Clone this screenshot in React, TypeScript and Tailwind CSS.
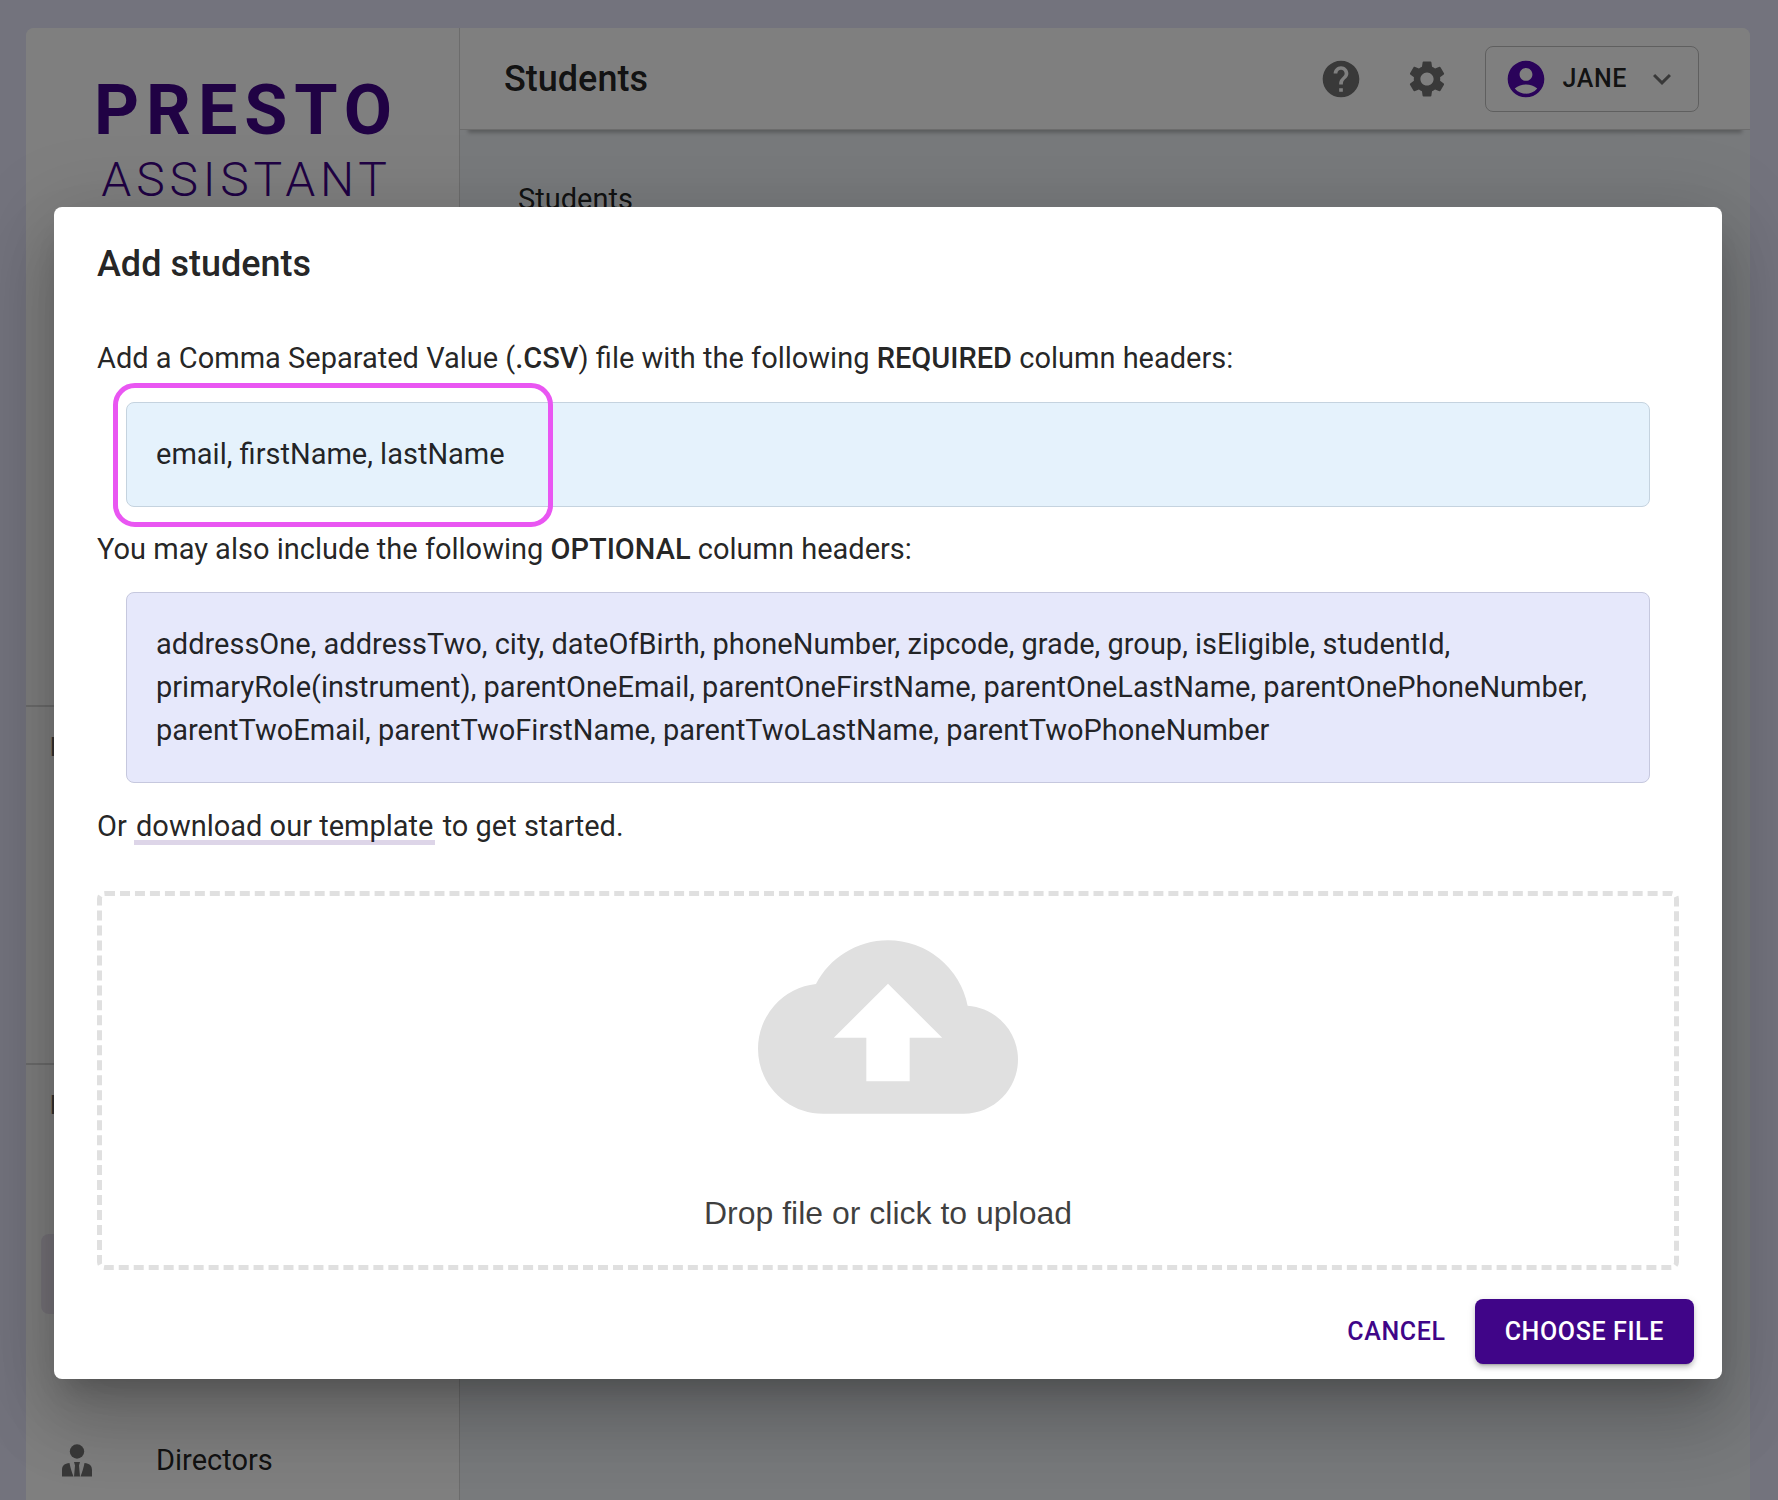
import type { ReactNode } from "react";
import { MdAccountCircle, MdCloudUpload, MdExpandMore, MdHelp, MdSettings } from "react-icons/md";

const requiredColumns = "email, firstName, lastName";

const optionalColumns = [
  "addressOne",
  "addressTwo",
  "city",
  "dateOfBirth",
  "phoneNumber",
  "zipcode",
  "grade",
  "group",
  "isEligible",
  "studentId",
  "primaryRole(instrument)",
  "parentOneEmail",
  "parentOneFirstName",
  "parentOneLastName",
  "parentOnePhoneNumber",
  "parentTwoEmail",
  "parentTwoFirstName",
  "parentTwoLastName",
  "parentTwoPhoneNumber",
];

function DirectorIcon() {
  return (
    <svg viewBox="0 0 30 33" className="h-[33px] w-[30px]" fill="currentColor" aria-hidden="true">
      <circle cx="15" cy="7.5" r="7.2" />
      <path d="M7.500 19 C8.500 24 10 29 11.500 32.500 H0 V26 C0 21.500 2.500 19.500 7.500 19 Z" />
      <path d="M22.500 19 C21.500 24 20 29 18.500 32.500 H30 V26 C30 21.500 27.500 19.500 22.500 19 Z" />
      <path d="M12 18 H18 L17 21.500 L18 32.500 H12 L13 21.500 Z" />
    </svg>
  );
}

function NavItem({ label, icon, selected }: { label: string; icon?: ReactNode; selected?: boolean }) {
  return (
    <li>
      <a
        href="#"
        className={`flex h-20 items-center rounded-lg pl-[21px] ${selected ? "bg-[#400588]/10" : ""}`}
      >
        <span className="w-[94px] text-black/55">{icon}</span>
        {label}
      </a>
    </li>
  );
}

function Sidebar() {
  return (
    <aside className="flex w-[434px] shrink-0 flex-col border-r border-black/15 bg-white pb-10">
      <div className="flex h-[677px] flex-col items-center pt-[42px] pl-2 text-[#400588]">
        <span className="text-[70px] leading-[80px] font-bold tracking-widest">PRESTO</span>
        <span className="text-[48px] leading-[60px] font-light tracking-widest">ASSISTANT</span>
      </div>
      <div className="h-[358px] border-t-2 border-black/15 pt-[21px] pl-6">
        <h3 className="text-[25px] leading-10 font-medium text-black/60">EVENTS</h3>
      </div>
      <div className="border-t-2 border-black/15 pt-[21px]">
        <h3 className="pl-6 text-[25px] leading-10 font-medium text-black/60">PEOPLE</h3>
        <ul className="mx-[15px] mt-[108px] flex flex-col gap-[13px]">
          <NavItem label="Students" selected />
          <NavItem label="Parents" />
          <NavItem label="Directors" icon={<DirectorIcon />} />
        </ul>
      </div>
    </aside>
  );
}

function Header() {
  return (
    <header className="flex h-[102px] items-center border-b border-black/15 bg-white pr-[51px] pl-11 shadow-[0_11px_4px_-8px_rgba(0,0,0,0.25)]">
      <h1 className="flex-1 text-[36px] leading-[58px] font-medium">Students</h1>
      <button type="button" aria-label="Help" className="text-black/55">
        <MdHelp className="size-11" />
      </button>
      <button type="button" aria-label="Settings" className="ml-[42px] text-black/55">
        <MdSettings className="size-11" />
      </button>
      <button
        type="button"
        className="ml-9 flex h-[66px] items-center rounded-lg border border-black/25 px-[18px] text-[25px] font-medium tracking-wide"
      >
        <MdAccountCircle className="size-11 text-[#5507b5]" />
        <span className="mr-[17px] ml-[14px]">JANE</span>
        <MdExpandMore className="size-9 text-black/55" />
      </button>
    </header>
  );
}

function AddStudentsDialog() {
  return (
    <div
      role="dialog"
      aria-modal="true"
      aria-labelledby="dialog-title"
      className="rounded-lg bg-white pt-7 pb-[15px] shadow-[0_20px_27px_-13px_rgba(0,0,0,0.2),0_43px_68px_5px_rgba(0,0,0,0.14),0_16px_83px_14px_rgba(0,0,0,0.12)]"
    >
      <h2 id="dialog-title" className="px-[43px] text-[36px] leading-[58px] font-medium">
        Add students
      </h2>

      <div className="px-[43px] pt-11">
        <p>
          Add a Comma Separated Value (<strong className="font-medium">.CSV</strong>) file with the following{" "}
          <strong className="font-medium">REQUIRED</strong> column headers:
        </p>
        <div className="relative mx-[29px] mt-[22px] mb-[21px] rounded-lg border border-[#c5d3df] bg-[#e5f2fc] px-[29px] py-[30px]">
          {requiredColumns}
          {/* highlight ring around the required headers */}
          <div className="absolute -top-5 -left-3.5 h-36 w-[440px] rounded-[22px] border-5 border-[#e956f2]" />
        </div>
        <p>
          You may also include the following <strong className="font-medium">OPTIONAL</strong> column headers:
        </p>
        <div className="mx-[29px] mt-[21px] mb-[22px] rounded-lg border border-[#c6c8de] bg-[#e6e8fb] px-[29px] py-[30px]">
          {optionalColumns.join(", ")}
        </div>
        <p>
          Or{" "}
          <a href="#" className="inline-block border-b-5 border-[#ddd5e8] px-0.5 leading-7">
            download our template
          </a>{" "}
          to get started.
        </p>

        <button
          type="button"
          className="mt-[43px] flex w-full flex-col items-center rounded-lg border-5 border-dashed border-[#e0e0e0] pt-px pb-7 font-['Liberation_Sans',Arial,sans-serif] text-[32px] leading-[48px] text-black/75"
        >
          <MdCloudUpload className="mb-8 size-[260px] text-[#e0e0e0]" />
          Drop file or click to upload
        </button>
      </div>

      <div className="mt-[29px] flex justify-end gap-[14px] pr-7 text-[25px] font-medium tracking-wide">
        <button type="button" className="h-[65px] px-[15px] text-[#400588]">
          CANCEL
        </button>
        <button
          type="button"
          className="h-[65px] rounded-lg bg-[#400588] px-[30px] text-white shadow-[0_5px_2px_-4px_rgba(0,0,0,0.2),0_4px_4px_rgba(0,0,0,0.14),0_2px_9px_rgba(0,0,0,0.12)]"
        >
          CHOOSE FILE
        </button>
      </div>
    </div>
  );
}

export default function App() {
  return (
    <div className="relative h-screen overflow-hidden bg-[#e6e6fa] font-['Roboto',sans-serif] text-[29px] leading-[43px] text-black/87">
      <div className="mt-7 mr-7 ml-[26px] flex overflow-hidden rounded-lg bg-[#f1f5f9]">
        <Sidebar />
        <main className="flex-1">
          <Header />
          <p className="mt-12 ml-[58px]">Students</p>
        </main>
      </div>

      <div className="absolute inset-0 bg-black/50 pt-[207px] pr-14 pl-[54px]">
        <AddStudentsDialog />
      </div>
    </div>
  );
}
